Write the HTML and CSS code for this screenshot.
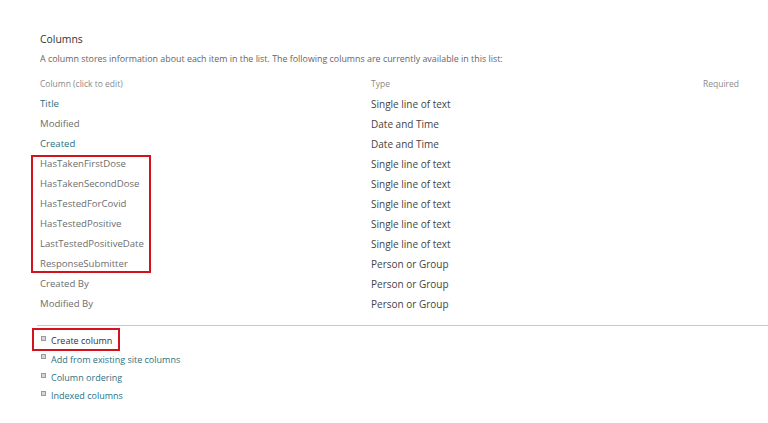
FILE: index.html
```html
<!DOCTYPE html>
<html lang="en">
<head>
<meta charset="utf-8">
<title>Columns</title>
<link rel="stylesheet" href="styles.css">
</head>
<body>
<div class="page">
  <section class="columns-section">
    <h2 class="section-title">Columns</h2>
    <p class="section-desc">A column stores information about each item in the list. The following columns are currently available in this list:</p>
    <div class="col-table">
      <div class="row head">
        <span class="cell">Column (click to edit)</span>
        <span class="cell">Type</span>
        <span class="cell">Required</span>
      </div>
      <div class="row"><a class="cell name link">Title</a><span class="cell type">Single line of text</span><span class="cell"></span></div>
      <div class="row"><span class="cell name">Modified</span><span class="cell type">Date and Time</span><span class="cell"></span></div>
      <div class="row"><a class="cell name link">Created</a><span class="cell type">Date and Time</span><span class="cell"></span></div>
      <div class="highlight-group">
        <div class="row"><span class="cell name">HasTakenFirstDose</span><span class="cell type">Single line of text</span><span class="cell"></span></div>
        <div class="row"><span class="cell name">HasTakenSecondDose</span><span class="cell type">Single line of text</span><span class="cell"></span></div>
        <div class="row"><span class="cell name">HasTestedForCovid</span><span class="cell type">Single line of text</span><span class="cell"></span></div>
        <div class="row"><span class="cell name">HasTestedPositive</span><span class="cell type">Single line of text</span><span class="cell"></span></div>
        <div class="row"><span class="cell name">LastTestedPositiveDate</span><span class="cell type">Single line of text</span><span class="cell"></span></div>
        <div class="row"><span class="cell name">ResponseSubmitter</span><span class="cell type">Person or Group</span><span class="cell"></span></div>
      </div>
      <div class="row"><span class="cell name">Created By</span><span class="cell type">Person or Group</span><span class="cell"></span></div>
      <div class="row"><span class="cell name">Modified By</span><span class="cell type">Person or Group</span><span class="cell"></span></div>
    </div>
  </section>
  <hr class="divider">
  <ul class="actions">
    <li class="action highlight-item"><span class="bullet"></span><a class="action-link dark">Create column</a></li>
    <li class="action"><span class="bullet"></span><a class="action-link">Add from existing site columns</a></li>
    <li class="action"><span class="bullet"></span><a class="action-link">Column ordering</a></li>
    <li class="action"><span class="bullet"></span><a class="action-link">Indexed columns</a></li>
  </ul>
</div>
</body>
</html>
```

FILE: styles.css
```css
html, body {
  margin: 0;
  padding: 0;
  background: #ffffff;
}

body {
  font-family: "Open Sans", "Noto Sans", "DejaVu Sans", sans-serif;
  color: #444444;
  width: 768px;
  height: 423px;
  overflow: hidden;
}

.page {
  padding-top: 29px;
}

.columns-section {
  padding-left: 40px;
}

.section-title {
  margin: 0;
  font-size: 10.4px;
  font-weight: 400;
  line-height: 20px;
  color: #333333;
}

.section-desc {
  margin: 0 0 5px 0;
  font-size: 8.9px;
  line-height: 20px;
  color: #666666;
}

.col-table {
  display: flex;
  flex-direction: column;
}

.row {
  display: grid;
  grid-template-columns: 331px 332px 1fr;
  height: 20px;
  align-items: center;
}

.cell {
  white-space: nowrap;
  font-size: 10px;
  line-height: 20px;
}

.head .cell {
  font-size: 8.5px;
  color: #8a8a8a;
}

.name {
  font-size: 9.6px;
  color: #6e6e6e;
}

.name.link {
  color: #2a7283;
}

.type {
  color: #444444;
}

.highlight-group {
  position: relative;
}

.highlight-group::after {
  content: "";
  position: absolute;
  left: -9px;
  top: 1px;
  bottom: 1px;
  width: 120px;
  box-sizing: border-box;
  border: 2px solid #d3121d;
  pointer-events: none;
}

.divider {
  margin: 11px 0 0 37px;
  border: 0;
  border-top: 1px solid #c8c8c8;
  height: 0;
}

.actions {
  list-style: none;
  margin: 6px 0 0 41px;
  padding: 0;
  display: flex;
  flex-direction: column;
}

.action {
  display: flex;
  align-items: center;
  gap: 5px;
  height: 18.4px;
  position: relative;
}

.bullet {
  width: 3px;
  height: 3px;
  border: 1px solid #9a9a9a;
  background: #d6d6d6;
  align-self: flex-start;
  margin-top: 4px;
}

.action-link {
  font-size: 9px;
  line-height: 18px;
  color: #2a7283;
  white-space: nowrap;
}

.action-link.dark {
  color: #333333;
}

.highlight-item::after {
  content: "";
  position: absolute;
  left: -9px;
  top: -4px;
  width: 88px;
  height: 23px;
  box-sizing: border-box;
  border: 2px solid #d3121d;
  pointer-events: none;
}
```
